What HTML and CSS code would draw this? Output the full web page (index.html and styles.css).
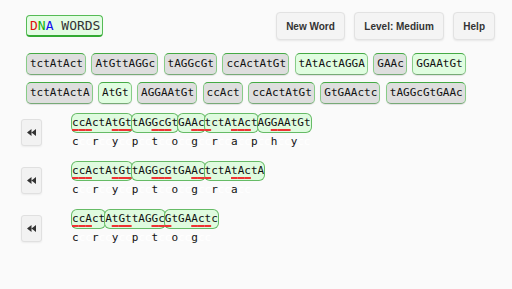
FILE: index.html
```html
<!DOCTYPE html>
<html lang="en">
<head>
    <meta charset="UTF-8">
    <meta name="viewport" content="width=device-width, initial-scale=1.0">
    <title>DNA Words</title>
    <link rel="stylesheet" href="styles.css">
</head>
<body>
    <div class="header">
        <div class="title"><span class="d">D</span><span class="n">N</span><span class="a">A</span> WORDS</div>
        <div class="buttons">
            <button class="btn">New Word</button>
            <button class="btn">Level: Medium</button>
            <button class="btn">Help</button>
        </div>
    </div>

    <div class="pool">
        <span class="tile">tctAtAct</span>
        <span class="tile">AtGttAGGc</span>
        <span class="tile">tAGGcGt</span>
        <span class="tile">ccActAtGt</span>
        <span class="tile used">tAtActAGGA</span>
        <span class="tile">GAAc</span>
        <span class="tile used">GGAAtGt</span>
        <span class="tile">tctAtActA</span>
        <span class="tile used">AtGt</span>
        <span class="tile">AGGAAtGt</span>
        <span class="tile">ccAct</span>
        <span class="tile">ccActAtGt</span>
        <span class="tile">GtGAActc</span>
        <span class="tile">tAGGcGtGAAc</span>
    </div>

    <div id="attempts"></div>

    <script>
        const attempts = [
            { chunks: ['ccActAtGt', 'tAGGcGt', 'GAAc', 'tctAtAct', 'AGGAAtGt'], letters: 'cryptography' },
            { chunks: ['ccActAtGt', 'tAGGcGtGAAc', 'tctAtActA'], letters: 'cryptogra' },
            { chunks: ['ccAct', 'AtGttAGGc', 'GtGAActc'], letters: 'cryptog' }
        ];

        const list = document.getElementById('attempts');

        attempts.forEach(attempt => {
            const row = document.createElement('div');
            row.className = 'attempt';

            const back = document.createElement('button');
            back.className = 'back';
            back.innerHTML = '<svg width="9" height="7" viewBox="0 0 9 7"><path d="M4.5 0L0 3.5L4.5 7ZM9 0L4.5 3.5L9 7Z" fill="#333"/></svg>';
            row.appendChild(back);

            const seq = document.createElement('div');
            seq.className = 'seq';

            const strand = document.createElement('div');
            strand.className = 'strand';
            let pos = 0;
            attempt.chunks.forEach(chunk => {
                const el = document.createElement('span');
                el.className = 'chunk';
                for (const ch of chunk) {
                    const c = document.createElement('span');
                    if (Math.floor(pos / 3) % 2 === 0) c.className = 'mark';
                    c.innerText = ch;
                    el.appendChild(c);
                    pos++;
                }
                strand.appendChild(el);
            });
            seq.appendChild(strand);

            const word = document.createElement('div');
            word.className = 'letters';
            for (const l of attempt.letters) {
                word.innerHTML += l + '<span class="ghost">cc</span>';
            }
            seq.appendChild(word);

            row.appendChild(seq);
            list.appendChild(row);
        });
    </script>
</body>
</html>
```

FILE: styles.css
```css
body {
    margin: 0;
    background-color: #fafafa;
    font-family: "DejaVu Sans Mono", monospace;
    color: #111;
}

.header {
    display: flex;
    justify-content: space-between;
    align-items: center;
    padding: 12px 17px 0 26px;
}

.title {
    font-size: 13px;
    line-height: 17px;
    padding: 1px 2px 1px 3px;
    background-color: #e4fce4;
    border: 1px solid #5b5;
    border-bottom: 2px solid #3a3;
    border-radius: 4px;
    color: #333;
}

.title .d { color: #e01010; }
.title .n { color: #10b010; }
.title .a { color: #1010f0; }

.buttons {
    display: flex;
    gap: 9.5px;
}

.btn {
    height: 28px;
    padding: 0 9px;
    font-family: "Liberation Sans", Arial, sans-serif;
    font-size: 10px;
    font-weight: bold;
    color: #333;
    background-color: #f4f4f4;
    border: 1px solid #e2e2e2;
    border-radius: 4px;
    box-shadow: 0 1px 2px rgba(0, 0, 0, 0.08);
}

.pool {
    display: flex;
    flex-wrap: wrap;
    gap: 7px 5.5px;
    padding: 13px 40px 0 26px;
}

.tile {
    font-size: 11px;
    line-height: 16px;
    padding: 2px 2px 2px 3px;
    background-color: #dedede;
    border: 1px solid #8c8;
    border-top-color: #4a4;
    border-bottom-color: #7a7;
    border-radius: 5px;
    box-shadow: 0 1px 1px rgba(0, 0, 0, 0.1);
}

.tile.used {
    background-color: #e0fde0;
}

#attempts {
    display: flex;
    flex-direction: column;
    gap: 12px;
    padding: 10px 0 0 21px;
}

.attempt {
    display: flex;
    align-items: center;
    gap: 30px;
}

.back {
    width: 21px;
    height: 27px;
    padding: 0;
    display: flex;
    align-items: center;
    justify-content: center;
    background-color: #f2f2f2;
    border: 1px solid #e0e0e0;
    border-radius: 3px;
    box-shadow: 0 1px 2px rgba(0, 0, 0, 0.06);
}

.seq {
    font-size: 11px;
}

.strand {
    display: flex;
    line-height: 18px;
}

.chunk {
    background-color: #dffbdf;
    border-radius: 5px;
    box-shadow: 0 0 0 1px #6b6;
}

.mark {
    text-decoration: underline #e33;
    text-decoration-thickness: 1.5px;
    text-underline-offset: 3px;
}

.letters {
    margin-top: 2px;
    line-height: 16px;
    color: #111;
}

.ghost {
    color: #fff;
}
```
